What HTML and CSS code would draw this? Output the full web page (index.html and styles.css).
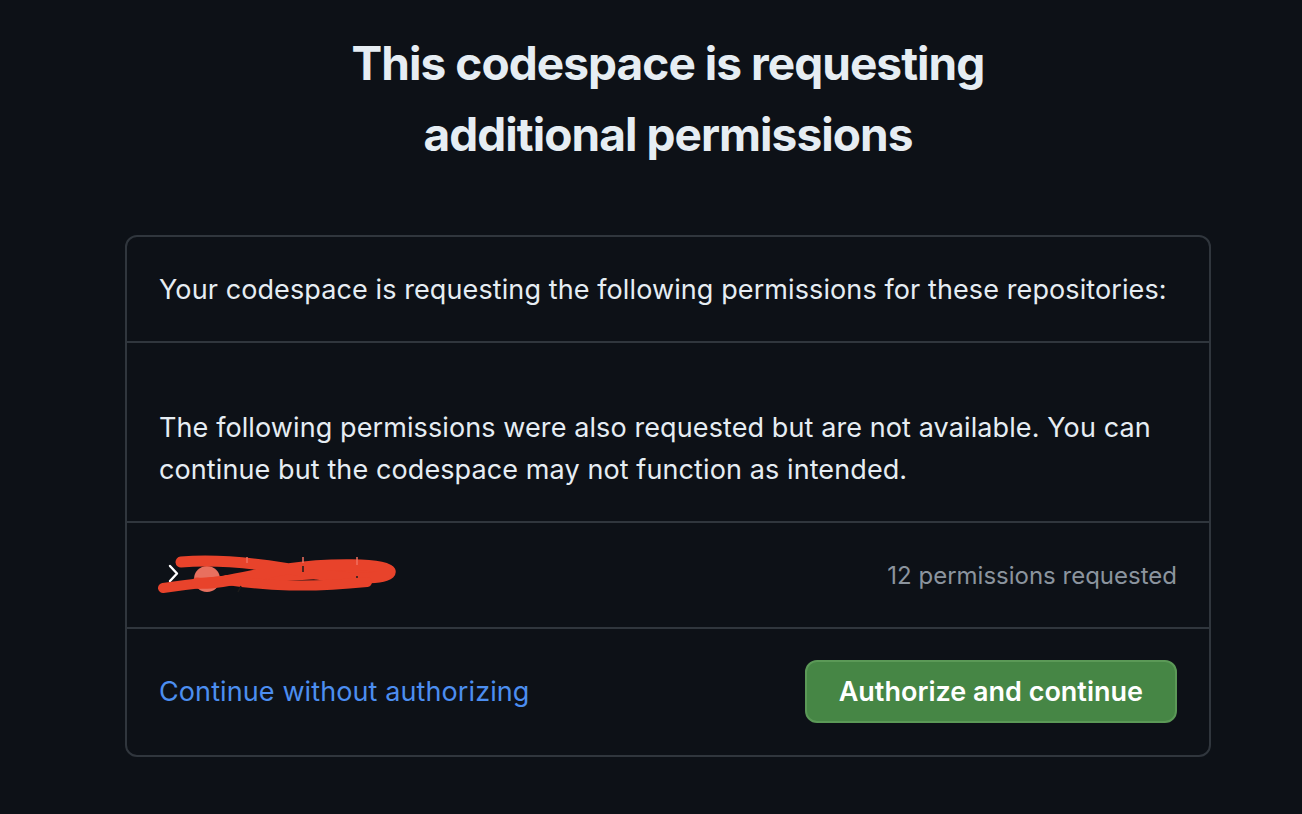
FILE: index.html
```html
<!DOCTYPE html>
<html lang="en">
<head>
<meta charset="utf-8">
<title>Codespace permissions</title>
<link rel="stylesheet" href="styles.css">
</head>
<body>
<main class="page">
  <h1 class="title">This codespace is requesting<br>additional permissions</h1>
  <section class="box">
    <div class="row row-head">
      <p class="text">Your codespace is requesting the following permissions for these repositories:</p>
    </div>
    <div class="row row-info">
      <div class="empty"></div>
      <p class="text">The following permissions were also requested but are not available. You can continue but the codespace may not function as intended.</p>
    </div>
    <div class="row row-repo">
      <div class="repo">
        <svg class="scribble" width="240" height="44" viewBox="0 0 240 44" aria-hidden="true">
          <circle cx="50" cy="25" r="13" fill="#e8705f"/>
          <path d="M13 12 L20 19.5 L13 27" fill="none" stroke="#ffffff" stroke-width="2.4" stroke-linecap="round" stroke-linejoin="round"/>
          <path d="M6 34 C60 26 120 22 232 16" fill="none" stroke="#e8432b" stroke-width="10" stroke-linecap="round"/>
          <path d="M24 8 C60 5 110 10 160 20 C200 27 236 24 233 17 C229 9 170 9 130 15 C95 21 60 31 40 29" fill="none" stroke="#e8432b" stroke-width="11" stroke-linecap="round"/>
          <path d="M70 26 C110 32 150 34 210 28" fill="none" stroke="#e8432b" stroke-width="10" stroke-linecap="round"/>
          <path d="M146 12 l0 6 M200 22 l0 2 M84 32 l-3 6" fill="none" stroke="#1c1c1c" stroke-width="1.5"/>
          <path d="M146 3 l0 6 M200 3 l0 8 M90 3 l0 6" fill="none" stroke="#f07060" stroke-width="1.5"/>
        </svg>
      </div>
      <span class="muted">12 permissions requested</span>
    </div>
    <div class="row row-actions">
      <a class="link" href="#">Continue without authorizing</a>
      <button class="btn" type="button">Authorize and continue</button>
    </div>
  </section>
</main>
</body>
</html>
```
FILE: styles.css
```css
html, body {
  margin: 0;
  padding: 0;
  background: #0d1117;
}
body {
  font-family: Inter, "Noto Sans", "Liberation Sans", sans-serif;
  color: #e6edf3;
}
.page {
  display: flex;
  flex-direction: column;
  align-items: center;
  padding: 28px 0 0 34px;
}
.title {
  margin: 0;
  font-size: 46px;
  line-height: 71px;
  font-weight: 700;
  text-align: center;
  letter-spacing: -0.95px;
}
.box {
  margin-top: 65px;
  width: 1086px;
  box-sizing: border-box;
  border: 2px solid #30363d;
  border-radius: 12px;
}
.row {
  padding: 32px;
  border-top: 2px solid #30363d;
}
.row-head {
  border-top: none;
  padding: 32px 32px 30px;
}
.text {
  margin: 0;
  font-size: 27px;
  line-height: 42px;
  letter-spacing: 0.1px;
}
.row-info {
  padding-top: 32px;
  padding-bottom: 30px;
}
.empty {
  height: 32px;
}
.row-repo {
  display: flex;
  align-items: center;
  justify-content: space-between;
  padding: 31px 32px 29px;
}
.repo {
  display: flex;
  align-items: center;
  height: 44px;
}
.scribble {
  display: block;
  margin-left: -2px;
}
.muted {
  color: #8b949e;
  font-size: 24px;
  line-height: 30px;
}
.row-actions {
  display: flex;
  align-items: center;
  justify-content: space-between;
  padding: 31px 32px 32px;
}
.link {
  color: #4c8ef0;
  text-decoration: none;
  font-size: 27px;
  line-height: 36px;
  letter-spacing: 0.1px;
}
.btn {
  font-family: inherit;
  font-size: 27px;
  font-weight: 600;
  color: #ffffff;
  background: #468645;
  border: 2px solid #5b9957;
  border-radius: 12px;
  height: 63px;
  padding: 0 32px;
  cursor: pointer;
}
```
